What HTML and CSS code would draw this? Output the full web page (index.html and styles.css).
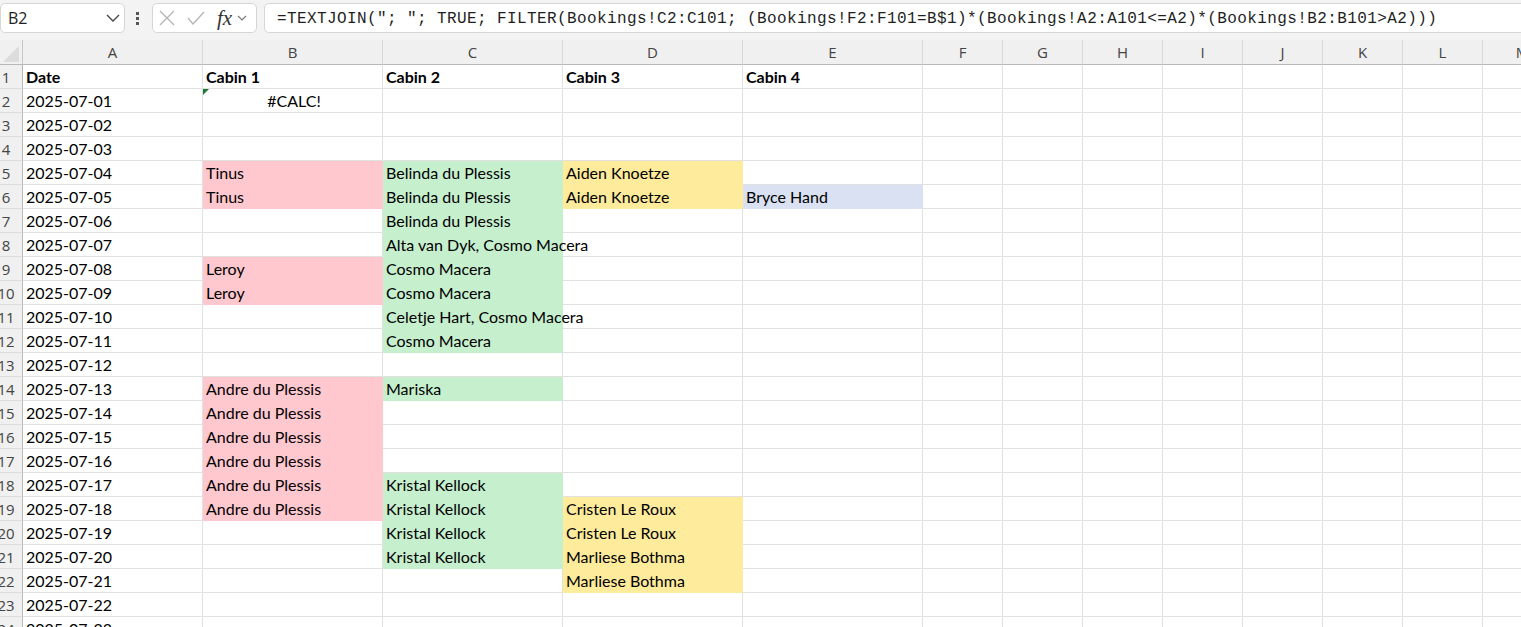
FILE: index.html
```html
<!DOCTYPE html>
<html>
<head>
    <title>Cabins</title>
    <meta name="viewport" content="width=device-width, initial-scale=1">
    <link rel="stylesheet" href="styles.css">
</head>
<body>
    <div class="formula-bar">
        <div class="name-box">
            <span>B2</span>
            <svg class="chev" width="14" height="8" viewBox="0 0 14 8"><path d="M1 1l6 6 6-6" fill="none" stroke="#444" stroke-width="1.3"/></svg>
        </div>
        <div class="grip"><i></i><i></i><i></i></div>
        <div class="fx-box">
            <svg width="16" height="16" viewBox="0 0 16 16"><path d="M1 1l14 14M15 1L1 15" stroke="#b4b4b4" stroke-width="1.3"/></svg>
            <svg width="18" height="14" viewBox="0 0 18 14"><path d="M1 7l5 6L17 1" fill="none" stroke="#b4b4b4" stroke-width="1.3"/></svg>
            <span class="fx">fx</span>
            <svg width="10" height="6" viewBox="0 0 10 6"><path d="M1 1l4 4 4-4" fill="none" stroke="#777" stroke-width="1.1"/></svg>
        </div>
        <div class="formula">=TEXTJOIN("; "; TRUE; FILTER(Bookings!C2:C101; (Bookings!F2:F101=B$1)*(Bookings!A2:A101&lt;=A2)*(Bookings!B2:B101&gt;A2)))</div>
    </div>

    <table class="sheet">
        <colgroup>
            <col class="c-rh">
            <col class="c-wide"><col class="c-wide"><col class="c-wide"><col class="c-wide"><col class="c-wide">
            <col class="c-std"><col class="c-std"><col class="c-std"><col class="c-std"><col class="c-std"><col class="c-std"><col class="c-std"><col class="c-std">
        </colgroup>
        <thead>
            <tr>
                <th class="corner"><svg width="16" height="16" viewBox="0 0 16 16"><path d="M16 0V16H0z" fill="#dcdcdc"/></svg></th>
                <th>A</th><th>B</th><th>C</th><th>D</th><th>E</th><th>F</th><th>G</th><th>H</th><th>I</th><th>J</th><th>K</th><th>L</th><th>M</th>
            </tr>
        </thead>
        <tbody>
            <tr><th><div>1</div></th><td class="bold">Date</td><td class="bold">Cabin 1</td><td class="bold">Cabin 2</td><td class="bold">Cabin 3</td><td class="bold">Cabin 4</td><td></td><td></td><td></td><td></td><td></td><td></td><td></td><td></td></tr>
            <tr><th><div>2</div></th><td>2025-07-01</td><td class="calc">#CALC!</td><td></td><td></td><td></td><td></td><td></td><td></td><td></td><td></td><td></td><td></td><td></td></tr>
            <tr><th><div>3</div></th><td>2025-07-02</td><td></td><td></td><td></td><td></td><td></td><td></td><td></td><td></td><td></td><td></td><td></td><td></td></tr>
            <tr><th><div>4</div></th><td>2025-07-03</td><td></td><td></td><td></td><td></td><td></td><td></td><td></td><td></td><td></td><td></td><td></td><td></td></tr>
            <tr><th><div>5</div></th><td>2025-07-04</td><td class="bad">Tinus</td><td class="good">Belinda du Plessis</td><td class="neutral">Aiden Knoetze</td><td></td><td></td><td></td><td></td><td></td><td></td><td></td><td></td><td></td></tr>
            <tr><th><div>6</div></th><td>2025-07-05</td><td class="bad">Tinus</td><td class="good">Belinda du Plessis</td><td class="neutral">Aiden Knoetze</td><td class="blue">Bryce Hand</td><td></td><td></td><td></td><td></td><td></td><td></td><td></td><td></td></tr>
            <tr><th><div>7</div></th><td>2025-07-06</td><td></td><td class="good">Belinda du Plessis</td><td></td><td></td><td></td><td></td><td></td><td></td><td></td><td></td><td></td><td></td></tr>
            <tr><th><div>8</div></th><td>2025-07-07</td><td></td><td class="good">Alta van Dyk, Cosmo Macera</td><td></td><td></td><td></td><td></td><td></td><td></td><td></td><td></td><td></td><td></td></tr>
            <tr><th><div>9</div></th><td>2025-07-08</td><td class="bad">Leroy</td><td class="good">Cosmo Macera</td><td></td><td></td><td></td><td></td><td></td><td></td><td></td><td></td><td></td><td></td></tr>
            <tr><th><div>10</div></th><td>2025-07-09</td><td class="bad">Leroy</td><td class="good">Cosmo Macera</td><td></td><td></td><td></td><td></td><td></td><td></td><td></td><td></td><td></td><td></td></tr>
            <tr><th><div>11</div></th><td>2025-07-10</td><td></td><td class="good">Celetje Hart, Cosmo Macera</td><td></td><td></td><td></td><td></td><td></td><td></td><td></td><td></td><td></td><td></td></tr>
            <tr><th><div>12</div></th><td>2025-07-11</td><td></td><td class="good">Cosmo Macera</td><td></td><td></td><td></td><td></td><td></td><td></td><td></td><td></td><td></td><td></td></tr>
            <tr><th><div>13</div></th><td>2025-07-12</td><td></td><td></td><td></td><td></td><td></td><td></td><td></td><td></td><td></td><td></td><td></td><td></td></tr>
            <tr><th><div>14</div></th><td>2025-07-13</td><td class="bad">Andre du Plessis</td><td class="good">Mariska</td><td></td><td></td><td></td><td></td><td></td><td></td><td></td><td></td><td></td><td></td></tr>
            <tr><th><div>15</div></th><td>2025-07-14</td><td class="bad">Andre du Plessis</td><td></td><td></td><td></td><td></td><td></td><td></td><td></td><td></td><td></td><td></td><td></td></tr>
            <tr><th><div>16</div></th><td>2025-07-15</td><td class="bad">Andre du Plessis</td><td></td><td></td><td></td><td></td><td></td><td></td><td></td><td></td><td></td><td></td><td></td></tr>
            <tr><th><div>17</div></th><td>2025-07-16</td><td class="bad">Andre du Plessis</td><td></td><td></td><td></td><td></td><td></td><td></td><td></td><td></td><td></td><td></td><td></td></tr>
            <tr><th><div>18</div></th><td>2025-07-17</td><td class="bad">Andre du Plessis</td><td class="good">Kristal Kellock</td><td></td><td></td><td></td><td></td><td></td><td></td><td></td><td></td><td></td><td></td></tr>
            <tr><th><div>19</div></th><td>2025-07-18</td><td class="bad">Andre du Plessis</td><td class="good">Kristal Kellock</td><td class="neutral">Cristen Le Roux</td><td></td><td></td><td></td><td></td><td></td><td></td><td></td><td></td><td></td></tr>
            <tr><th><div>20</div></th><td>2025-07-19</td><td></td><td class="good">Kristal Kellock</td><td class="neutral">Cristen Le Roux</td><td></td><td></td><td></td><td></td><td></td><td></td><td></td><td></td><td></td></tr>
            <tr><th><div>21</div></th><td>2025-07-20</td><td></td><td class="good">Kristal Kellock</td><td class="neutral">Marliese Bothma</td><td></td><td></td><td></td><td></td><td></td><td></td><td></td><td></td><td></td></tr>
            <tr><th><div>22</div></th><td>2025-07-21</td><td></td><td></td><td class="neutral">Marliese Bothma</td><td></td><td></td><td></td><td></td><td></td><td></td><td></td><td></td><td></td></tr>
            <tr><th><div>23</div></th><td>2025-07-22</td><td></td><td></td><td></td><td></td><td></td><td></td><td></td><td></td><td></td><td></td><td></td><td></td></tr>
            <tr><th><div>24</div></th><td>2025-07-23</td><td></td><td></td><td></td><td></td><td></td><td></td><td></td><td></td><td></td><td></td><td></td><td></td></tr>
        </tbody>
    </table>
</body>
</html>
```

FILE: styles.css
```css
body { margin: 0; background: #fff; font-family: Lato, 'Noto Sans', sans-serif; overflow: hidden; height: 627px; }

/* formula bar */
.formula-bar { display: flex; align-items: center; height: 40px; padding: 3px 0 7px; box-sizing: border-box; background: #f3f3f3; }
.name-box { display: flex; align-items: center; justify-content: space-between; width: 125px; height: 30px; box-sizing: border-box; padding: 0 4px 0 7px; background: #fff; border: 1px solid #d6d6d6; border-radius: 5px; font-family: 'Open Sans', sans-serif; font-size: 16px; color: #222; }
.grip { display: flex; flex-direction: column; gap: 2px; margin: 0 13px 0 11px; }
.grip i { width: 3px; height: 3px; background: #555; }
.fx-box { display: flex; align-items: center; gap: 12px; width: 105px; height: 30px; box-sizing: border-box; padding: 0 4px 0 6px; background: #fff; border: 1px solid #d6d6d6; border-radius: 5px; }
.fx-box .fx { font-family: 'Liberation Serif', serif; font-style: italic; font-size: 21px; color: #333; margin-right: -7px; }
.formula { flex: 1; margin: 0 -10px 0 7px; height: 30px; line-height: 30px; padding-left: 12px; box-sizing: border-box; background: #fff; border: 1px solid #d6d6d6; border-radius: 5px; font-family: 'Liberation Mono', monospace; font-size: 16px; letter-spacing: 0.4px; color: #1f1f1f; white-space: nowrap; overflow: hidden; }

/* grid */
.sheet { table-layout: fixed; width: 1563px; border-collapse: separate; border-spacing: 0; font-size: 16px; color: #000; }
.c-rh { width: 23px; }
.c-wide { width: 180px; }
.c-std { width: 80px; }
.sheet th, .sheet td { box-sizing: border-box; padding: 0; height: 24px; white-space: nowrap; }
.sheet thead th { height: 25px; background: #f0f0f0; border-right: 1px solid #d9d9d9; border-bottom: 1px solid #b8b8b8; font-family: 'Open Sans', sans-serif; font-weight: normal; font-size: 15px; color: #444; }
.sheet thead th.corner { border-right-color: #c8c8c8; text-align: right; vertical-align: bottom; padding: 0 3px 2px 0; line-height: 0; }
.sheet tbody th { background: #f0f0f0; border-right: 1px solid #b8b8b8; border-bottom: 1px solid #dcdcdc; font-family: 'Open Sans', sans-serif; font-weight: normal; font-size: 15px; color: #444; }
.sheet tbody th div { display: flex; justify-content: center; width: 12px; }
.sheet td { border-right: 1px solid #e1e1e1; border-bottom: 1px solid #e1e1e1; padding-left: 3px; overflow: visible; }
.bold { font-weight: bold; }
.calc { position: relative; text-align: center; padding-left: 0; }
.calc::before { content: ""; position: absolute; left: 0; top: 0; border-top: 6px solid #1e7b34; border-right: 6px solid transparent; }
.bad { background: #ffc7ce; border-color: #ffc7ce !important; }
.good { background: #c6efce; border-color: #c6efce !important; }
.neutral { background: #ffeb9c; border-color: #ffeb9c !important; }
.blue { background: #d9e1f2; border-color: #d9e1f2 !important; }
```
